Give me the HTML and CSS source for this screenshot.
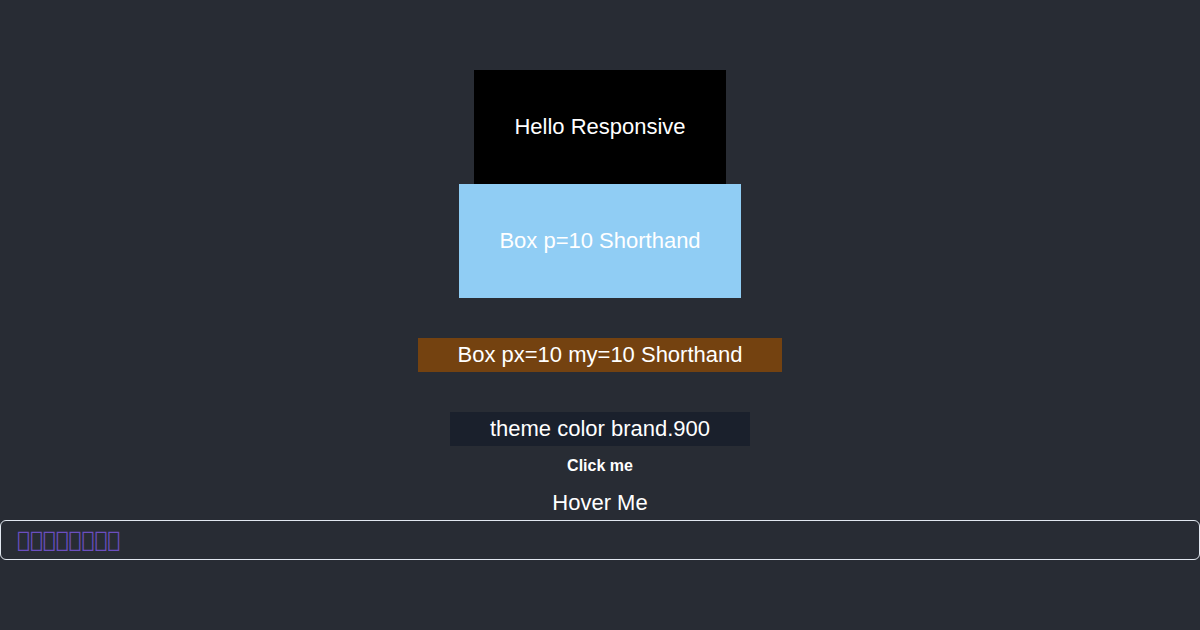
FILE: index.html
```html
<!DOCTYPE html>
<html lang="en">
<head>
    <meta charset="UTF-8">
    <meta name="viewport" content="width=device-width, initial-scale=1.0">
    <title>Chakra Boxes</title>
    <link rel="stylesheet" href="styles.css">
</head>
<body>
    <div class="app">
        <div class="box box-black">Hello Responsive</div>
        <div class="box box-blue">Box p=10 Shorthand</div>
        <div class="box box-brown">Box px=10 my=10 Shorthand</div>
        <div class="box box-brand">theme color brand.900</div>
        <button class="click-btn">Click me</button>
        <div class="hover">Hover Me</div>
        <div class="link-box">
            <a class="link" href="#">&#xE000;&#xE001;&#xE002;&#xE003;&#xE004;&#xE005;&#xE006;&#xE007;</a>
        </div>
    </div>
</body>
</html>
```

FILE: styles.css
```css
*{
    box-sizing: border-box;
}
body{
    margin: 0;
    background-color: #282c34;
    color: #fff;
    font-family: 'Liberation Sans', Arial, sans-serif;
}
.app{
    min-height: 100vh;
    display: flex;
    flex-direction: column;
    align-items: center;
    justify-content: center;
    font-size: 22px;
    line-height: 34px;
}
.box{
    padding: 40px;
}
.box-black{
    background-color: #000;
}
.box-blue{
    background-color: #90cdf4;
}
.box-brown{
    background-color: #744210;
    padding: 0 40px;
    margin: 40px 0;
}
.box-brand{
    background-color: #1a202c;
    padding: 0 40px;
}
.click-btn{
    height: 40px;
    padding: 0 16px;
    border: none;
    background: transparent;
    color: #fff;
    font-family: inherit;
    font-size: 16px;
    font-weight: 700;
    cursor: pointer;
}
.hover{
    cursor: pointer;
}
.link-box{
    align-self: stretch;
    height: 40px;
    display: flex;
    align-items: center;
    padding: 0 16px;
    border: 1px solid #e2e8f0;
    border-radius: 6px;
}
.link{
    color: #6b4fc0;
    font-family: 'DejaVu Sans', sans-serif;
    font-size: 21.5px;
    line-height: 24px;
}
```
